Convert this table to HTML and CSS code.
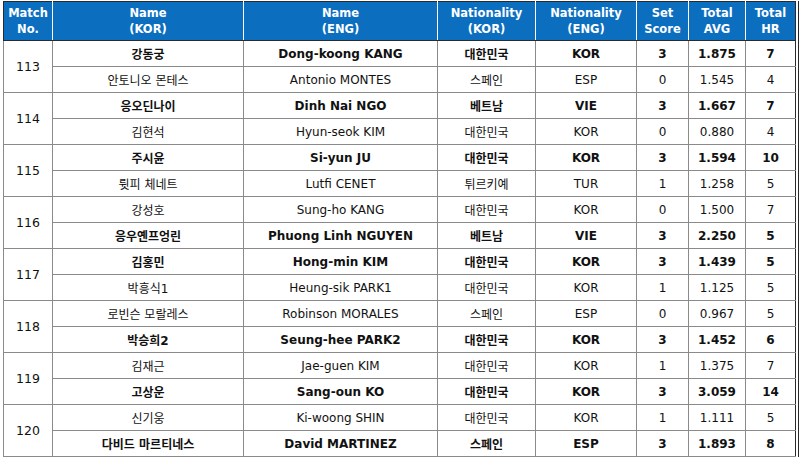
FILE: index.html
```html
<!DOCTYPE html>
<html lang="ko">
<head>
<meta charset="utf-8">
<link rel="stylesheet" href="styles.css">
</head>
<body>
<div class="wrap">
<table class="results">
  <colgroup>
    <col class="c-match"><col class="c-nk"><col class="c-ne"><col class="c-natk"><col class="c-nate"><col class="c-set"><col class="c-avg"><col class="c-hr">
  </colgroup>
  <thead>
    <tr>
      <th>Match<br>No.</th><th>Name<br>(KOR)</th><th>Name<br>(ENG)</th><th>Nationality<br>(KOR)</th><th>Nationality<br>(ENG)</th><th>Set<br>Score</th><th>Total<br>AVG</th><th>Total<br>HR</th>
    </tr>
  </thead>
  <tbody>
    <tr class="win"><td class="match" rowspan="2">113</td><td>강동궁</td><td>Dong-koong KANG</td><td>대한민국</td><td>KOR</td><td>3</td><td>1.875</td><td>7</td></tr>
    <tr><td>안토니오 몬테스</td><td>Antonio MONTES</td><td>스페인</td><td>ESP</td><td>0</td><td>1.545</td><td>4</td></tr>
    <tr class="win"><td class="match" rowspan="2">114</td><td>응오딘나이</td><td>Dinh Nai NGO</td><td>베트남</td><td>VIE</td><td>3</td><td>1.667</td><td>7</td></tr>
    <tr><td>김현석</td><td>Hyun-seok KIM</td><td>대한민국</td><td>KOR</td><td>0</td><td>0.880</td><td>4</td></tr>
    <tr class="win"><td class="match" rowspan="2">115</td><td>주시윤</td><td>Si-yun JU</td><td>대한민국</td><td>KOR</td><td>3</td><td>1.594</td><td>10</td></tr>
    <tr><td>륏피 체네트</td><td>Lutfi CENET</td><td>튀르키예</td><td>TUR</td><td>1</td><td>1.258</td><td>5</td></tr>
    <tr><td class="match" rowspan="2">116</td><td>강성호</td><td>Sung-ho KANG</td><td>대한민국</td><td>KOR</td><td>0</td><td>1.500</td><td>7</td></tr>
    <tr class="win"><td>응우옌프엉린</td><td>Phuong Linh NGUYEN</td><td>베트남</td><td>VIE</td><td>3</td><td>2.250</td><td>5</td></tr>
    <tr class="win"><td class="match" rowspan="2">117</td><td>김홍민</td><td>Hong-min KIM</td><td>대한민국</td><td>KOR</td><td>3</td><td>1.439</td><td>5</td></tr>
    <tr><td>박흥식1</td><td>Heung-sik PARK1</td><td>대한민국</td><td>KOR</td><td>1</td><td>1.125</td><td>5</td></tr>
    <tr><td class="match" rowspan="2">118</td><td>로빈슨 모랄레스</td><td>Robinson MORALES</td><td>스페인</td><td>ESP</td><td>0</td><td>0.967</td><td>5</td></tr>
    <tr class="win"><td>박승희2</td><td>Seung-hee PARK2</td><td>대한민국</td><td>KOR</td><td>3</td><td>1.452</td><td>6</td></tr>
    <tr><td class="match" rowspan="2">119</td><td>김재근</td><td>Jae-guen KIM</td><td>대한민국</td><td>KOR</td><td>1</td><td>1.375</td><td>7</td></tr>
    <tr class="win"><td>고상운</td><td>Sang-oun KO</td><td>대한민국</td><td>KOR</td><td>3</td><td>3.059</td><td>14</td></tr>
    <tr><td class="match" rowspan="2">120</td><td>신기웅</td><td>Ki-woong SHIN</td><td>대한민국</td><td>KOR</td><td>1</td><td>1.111</td><td>5</td></tr>
    <tr class="win"><td>다비드 마르티네스</td><td>David MARTINEZ</td><td>스페인</td><td>ESP</td><td>3</td><td>1.893</td><td>8</td></tr>
  </tbody>
</table>
<div class="edge"></div>
</div>
</body>
</html>
```

FILE: styles.css
```css
html, body {
  margin: 0;
  padding: 0;
  background: #ffffff;
}
body {
  font-family: "DejaVu Sans", Verdana, "Noto Sans CJK KR", sans-serif;
  color: #111111;
}
.wrap {
  display: flex;
  align-items: stretch;
  padding: 1px 0 0 3px;
}
.results {
  border-collapse: collapse;
  table-layout: fixed;
  width: 792px;
  font-size: 12px;
}
.c-match { width: 49px; }
.c-nk { width: 191px; }
.c-ne { width: 194px; }
.c-natk { width: 98px; }
.c-nate { width: 101px; }
.c-set { width: 52px; }
.c-avg { width: 57px; }
.c-hr { width: 50px; }

.results th {
  background: #0c6ebf;
  color: #ffffff;
  font-weight: bold;
  font-size: 11.5px;
  line-height: 16px;
  height: 38px;
  padding: 0;
  text-align: center;
  border-top: 1px solid #2a2a2a;
  border-bottom: 1px solid #2a2a2a;
  border-left: 1px solid #ffffff;
  border-right: 1px solid #ffffff;
}
.results th:first-child { border-left: 1px solid #2a2a2a; }
.results th:last-child { border-right: 1px solid #2a2a2a; }

.results td {
  height: 25px;
  padding: 0;
  text-align: center;
  border: 1px solid #8a8a8a;
}
.results td:last-child { border-right: 1px solid #2a2a2a; }
.results td.match { border-left: 1px solid #8a8a8a; font-size: 12.5px; }
.results tr.win td { font-weight: bold; }
.results tr.win td.match { font-weight: normal; }

.edge {
  width: 1px;
  margin-left: 2px;
  background: #2a2a2a;
}
```
